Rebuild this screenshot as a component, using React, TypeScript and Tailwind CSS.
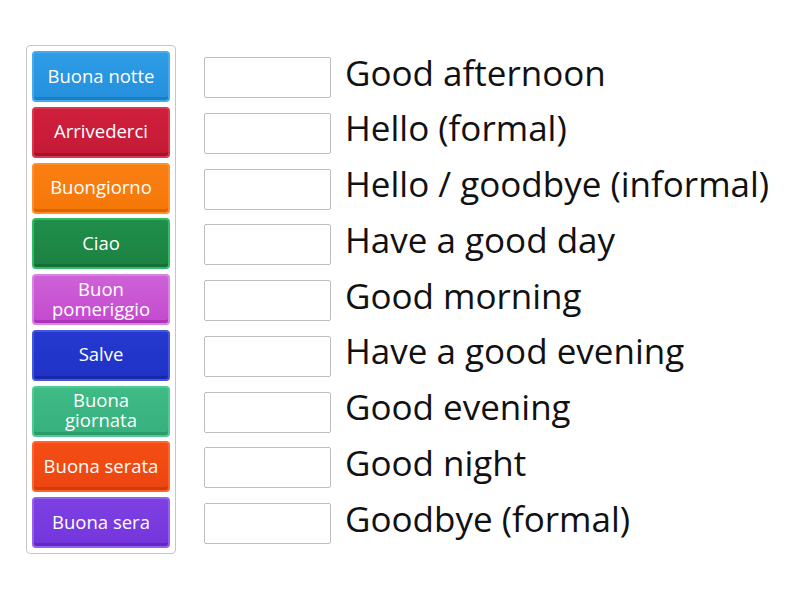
import React from "react";

const tiles: { label: string; cls: string }[] = [
  { label: "Buona notte", cls: "border-[#45aaee] bg-gradient-to-b from-[#2e9ce6] to-[#2590dc] shadow-[inset_0_-3px_0_#1c7fc6]" },
  { label: "Arrivederci", cls: "border-[#d9384f] bg-gradient-to-b from-[#cf1f3c] to-[#c41a36] shadow-[inset_0_-3px_0_#a3142c]" },
  { label: "Buongiorno", cls: "border-[#ff8f2a] bg-gradient-to-b from-[#fa7f12] to-[#f57708] shadow-[inset_0_-3px_0_#dc6500]" },
  { label: "Ciao", cls: "border-[#2fbd62] bg-gradient-to-b from-[#208f4b] to-[#1c8142] shadow-[inset_0_-3px_0_#176d37]" },
  { label: "Buon pomeriggio", cls: "border-[#d983e2] bg-gradient-to-b from-[#cd62d7] to-[#c449cf] shadow-[inset_0_-3px_0_#ac34b8]" },
  { label: "Salve", cls: "border-[#4357dc] bg-gradient-to-b from-[#2539d0] to-[#2032c6] shadow-[inset_0_-3px_0_#1928a8]" },
  { label: "Buona giornata", cls: "border-[#52c994] bg-gradient-to-b from-[#3ebb86] to-[#37b07d] shadow-[inset_0_-3px_0_#2c9a6b]" },
  { label: "Buona serata", cls: "border-[#ff6330] bg-gradient-to-b from-[#f44d15] to-[#ec4610] shadow-[inset_0_-3px_0_#d03c0a]" },
  { label: "Buona sera", cls: "border-[#9460ec] bg-gradient-to-b from-[#7d40e2] to-[#7436dc] shadow-[inset_0_-3px_0_#6028c4]" },
];

const phrases = [
  "Good afternoon",
  "Hello (formal)",
  "Hello / goodbye (informal)",
  "Have a good day",
  "Good morning",
  "Have a good evening",
  "Good evening",
  "Good night",
  "Goodbye (formal)",
];

export default function App() {
  return (
    <div
      className="w-[800px] h-[600px] bg-white flex items-start pt-[45px] pl-[26px]"
      style={{ fontFamily: '"Open Sans", "Noto Sans", sans-serif' }}
    >
      <div className="w-[150px] border border-[#c6c6c6] rounded-[4px] p-[5px] flex flex-col gap-[4.75px]">
        {tiles.map((t) => (
          <div
            key={t.label}
            className={`h-[51px] rounded-[4px] border-2 flex items-center justify-center text-center text-white text-[18.5px] leading-[20px] font-medium px-[3px] pb-[2px] ${t.cls}`}
          >
            {t.label}
          </div>
        ))}
      </div>
      <div className="ml-[28px] pt-[6px] flex flex-col gap-[4.75px]">
        {phrases.map((p) => (
          <div key={p} className="h-[51px] flex items-center">
            <div className="w-[127px] h-[41px] border border-[#bdbdbd] rounded-[2px] bg-white mt-[2px]" />
            <div className="ml-[14px] text-[35px] text-[#111] leading-none -mt-[9px] whitespace-nowrap">
              {p}
            </div>
          </div>
        ))}
      </div>
    </div>
  );
}
